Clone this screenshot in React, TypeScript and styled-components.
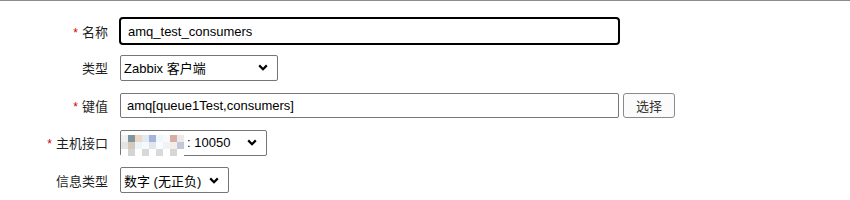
import React from "react";
import styled, { createGlobalStyle } from "styled-components";

const Global = createGlobalStyle`
  html, body { margin: 0; padding: 0; background: #fff; }
  body { font-family: "Liberation Sans", Arial, "Noto Sans CJK SC", sans-serif; font-size: 13px; color: #1f1f1f; }
`;

const Page = styled.div`
  width: 850px;
  height: 200px;
  border-top: 1px solid #8c8c8c;
  box-sizing: border-box;
  overflow: hidden;
`;

const Form = styled.div`
  display: flex;
  flex-direction: column;
  gap: 11.5px;
  padding-top: 16px;
`;

const Row = styled.div`
  display: grid;
  grid-template-columns: 108px auto;
  column-gap: 12px;
  align-items: center;
  height: 26px;
`;

const Label = styled.div`
  text-align: right;
  font-size: 13px;
  font-family: "Liberation Sans", Arial, "Noto Sans CJK SC", sans-serif;
  color: #1f1f1f;
  white-space: nowrap;
`;

const Star = styled.span`
  color: #d40000;
  margin-right: 4px;
  font-size: 12px;
`;

const Controls = styled.div`
  display: flex;
  align-items: center;
  gap: 4px;
`;

const TextInput = styled.input<{ $w: number; $focus?: boolean }>`
  box-sizing: border-box;
  width: ${(p) => p.$w}px;
  height: ${(p) => (p.$focus ? 28 : 25)}px;
  margin-left: ${(p) => (p.$focus ? -1 : 0)}px;
  border: ${(p) => (p.$focus ? "2px solid #000" : "1px solid #767676")};
  border-radius: ${(p) => (p.$focus ? 4 : 2)}px;
  padding: 0 ${(p) => (p.$focus ? 7 : 6)}px;
  font-family: "Liberation Sans", Arial, "Noto Sans CJK SC", sans-serif;
  font-size: 13px;
  color: #000;
  background: #fff;
  outline: none;
  text-decoration: ${(p) => (p.$focus ? "underline wavy #e04040" : "none")};
  text-decoration-thickness: 1px;
  text-underline-offset: 2px;
`;

const SelectBox = styled.div<{ $w: number }>`
  box-sizing: border-box;
  width: ${(p) => p.$w}px;
  height: 26px;
  border: 1px solid #767676;
  border-radius: 2px;
  background: #fff;
  display: flex;
  align-items: center;
  padding: 0 9px 0 3px;
  font-family: "Liberation Sans", Arial, "Noto Sans CJK SC", sans-serif;
  font-size: 13px;
  color: #000;
`;

const SelectText = styled.span`
  flex: 1;
  display: flex;
  align-items: center;
  white-space: nowrap;
`;

const Button = styled.button`
  box-sizing: border-box;
  width: 52px;
  height: 25px;
  border: 1px solid #8a8a8a;
  border-radius: 3px;
  background: #fbfbfb;
  font-family: "Liberation Sans", Arial, "Noto Sans CJK SC", sans-serif;
  font-size: 13px;
  color: #333;
  padding: 0;
`;

const Mosaic = styled.span`
  display: grid;
  grid-template-columns: repeat(9, 7px);
  grid-template-rows: repeat(3, 7px);
  margin-left: -3px;
  margin-right: 3px;
  margin-top: 5px;
`;

const Cell = styled.span<{ $c: string }>`
  background: ${(p) => p.$c};
`;

const Chevron = () => (
  <svg width="10" height="7" viewBox="0 0 10 7">
    <path d="M1.2 1.4 L5 5.2 L8.8 1.4" fill="none" stroke="#000" strokeWidth="2.2" />
  </svg>
);

const cells = [
  "#f0f0f0", "#7f969c", "#efd8c3", "#dcebf5", "#a7b3d8", "#eef8fb", "#fafafa", "#d8aea4", "#eaeaea",
  "#e4e4e4", "#d4c9bc", "#eaf4fa", "#f8f8f8", "#e2e6ec", "#f8fbff", "#f2f2f2", "#f4eeea", "#c2c8d8",
  "#ffffff", "#d4d4d4", "#ffffff", "#d8d8d8", "#ffffff", "#dadada", "#ffffff", "#d6d6d6", "#ffffff",
];

export default function App() {
  return (
    <Page>
      <Global />
      <Form>
        <Row>
          <Label><Star>*</Star>名称</Label>
          <Controls>
            <TextInput $w={501} $focus defaultValue="amq_test_consumers" />
          </Controls>
        </Row>
        <Row>
          <Label>类型</Label>
          <Controls>
            <SelectBox $w={158}>
              <SelectText>Zabbix 客户端</SelectText>
              <Chevron />
            </SelectBox>
          </Controls>
        </Row>
        <Row>
          <Label><Star>*</Star>键值</Label>
          <Controls>
            <TextInput $w={499} defaultValue="amq[queue1Test,consumers]" />
            <Button>选择</Button>
          </Controls>
        </Row>
        <Row>
          <Label><Star>*</Star>主机接口</Label>
          <Controls>
            <SelectBox $w={147}>
              <SelectText>
                <Mosaic>
                  {cells.map((c, i) => (
                    <Cell key={i} $c={c} />
                  ))}
                </Mosaic>
                : 10050
              </SelectText>
              <Chevron />
            </SelectBox>
          </Controls>
        </Row>
        <Row>
          <Label>信息类型</Label>
          <Controls>
            <SelectBox $w={109}>
              <SelectText>数字 (无正负)</SelectText>
              <Chevron />
            </SelectBox>
          </Controls>
        </Row>
      </Form>
    </Page>
  );
}
